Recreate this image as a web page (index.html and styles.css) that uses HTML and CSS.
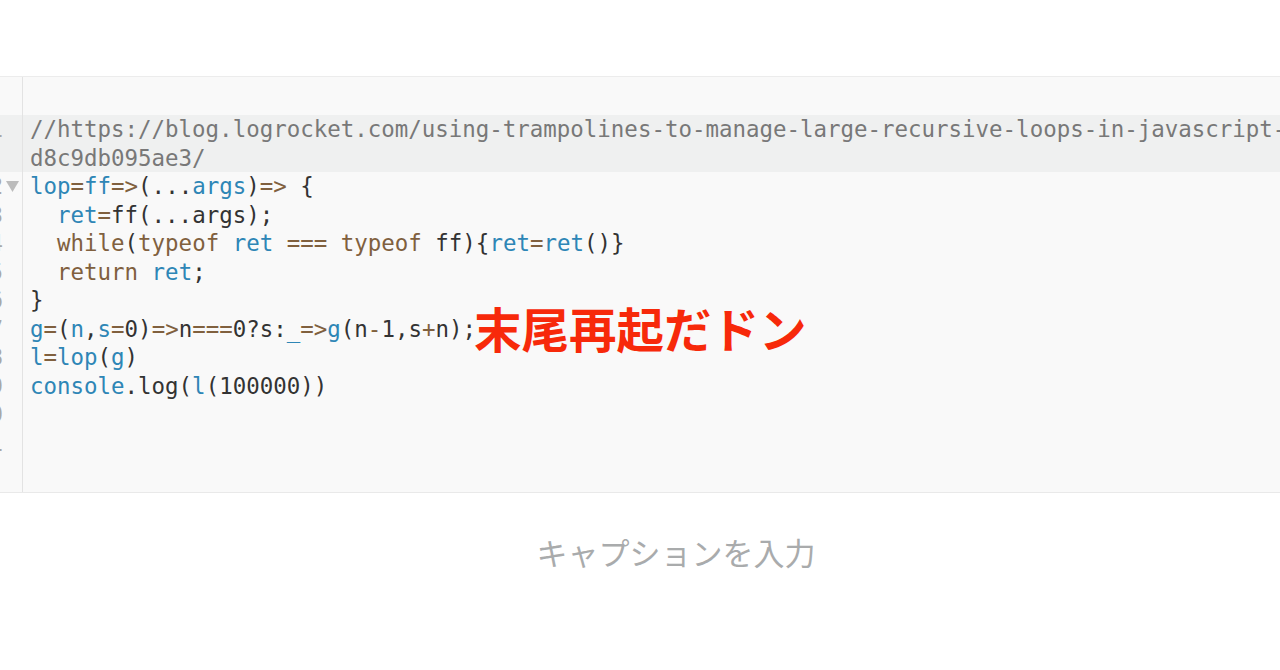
FILE: index.html
```html
<!DOCTYPE html>
<html lang="ja">
<head>
<meta charset="utf-8">
<title>code</title>
<link rel="stylesheet" href="styles.css">
</head>
<body>
<figure class="figure">
  <div class="editor">
    <div class="gutter">
      <div class="gl gl-2"><span class="num">1</span><span class="fold"></span></div>
      <div class="gl"><span class="num">2</span><span class="fold"><svg class="fold-icon" width="13" height="11" viewBox="0 0 13 11"><polygon points="0,0 13,0 6.5,11" fill="#bcbcbc"/></svg></span></div>
      <div class="gl"><span class="num">3</span><span class="fold"></span></div>
      <div class="gl"><span class="num">4</span><span class="fold"></span></div>
      <div class="gl"><span class="num">5</span><span class="fold"></span></div>
      <div class="gl"><span class="num">6</span><span class="fold"></span></div>
      <div class="gl"><span class="num">7</span><span class="fold"></span></div>
      <div class="gl"><span class="num">8</span><span class="fold"></span></div>
      <div class="gl"><span class="num">9</span><span class="fold"></span></div>
      <div class="gl"><span class="num">10</span><span class="fold"></span></div>
      <div class="gl"><span class="num">11</span><span class="fold"></span></div>
    </div>
    <div class="code">
      <div class="line line-active"><span class="cm">//https://blog.logrocket.com/using-trampolines-to-manage-large-recursive-loops-in-javascript-
d8c9db095ae3/</span></div>
      <div class="line"><span class="v">lop</span><span class="o">=</span><span class="v">ff</span><span class="o">=&gt;</span>(...<span class="v">args</span>)<span class="o">=&gt;</span> {</div>
      <div class="line">  <span class="v">ret</span><span class="o">=</span>ff(...args);</div>
      <div class="line">  <span class="k">while</span>(<span class="k">typeof</span> <span class="v">ret</span> <span class="o">===</span> <span class="k">typeof</span> ff){<span class="v">ret</span><span class="o">=</span><span class="v">ret</span>()}</div>
      <div class="line">  <span class="k">return</span> <span class="v">ret</span>;</div>
      <div class="line">}</div>
      <div class="line"><span class="v">g</span><span class="o">=</span>(<span class="v">n</span>,<span class="v">s</span><span class="o">=</span>0)<span class="o">=&gt;</span>n<span class="o">===</span>0?s:<span class="v">_</span><span class="o">=&gt;</span><span class="v">g</span>(n<span class="o">-</span>1,s<span class="o">+</span>n);<span class="note">末尾再起だドン</span></div>
      <div class="line"><span class="v">l</span><span class="o">=</span><span class="v">lop</span>(<span class="v">g</span>)</div>
      <div class="line"><span class="v">console</span>.log(<span class="v">l</span>(100000))</div>
      <div class="line"> </div>
    </div>
  </div>
  <figcaption class="caption">キャプションを入力</figcaption>
</figure>
</body>
</html>
```
FILE: styles.css
```css
html, body {
  margin: 0;
  padding: 0;
  background: #ffffff;
}

body {
  width: 1280px;
  height: 670px;
  overflow: hidden;
}

.figure {
  margin: 0;
  padding-top: 76px;
}

.editor {
  display: flex;
  height: 415px;
  background: #f9f9f9;
  border-top: 1px solid #ececec;
  border-bottom: 1px solid #e9e9e9;
  overflow: hidden;
  font-family: "DejaVu Sans Mono", monospace;
  font-size: 22.45px;
  line-height: 28.5px;
  color: #333333;
}

.gutter {
  flex: 0 0 22px;
  width: 22px;
  border-right: 1px solid #e3e3e3;
  padding-top: 38px;
  overflow: hidden;
  color: #a8a8a8;
}

.gl {
  display: flex;
  height: 28.5px;
  justify-content: flex-end;
}

.gl-2 {
  height: 57px;
  background: #eff0f0;
}

.gl .num {
  display: flex;
  justify-content: flex-end;
  flex: 0 0 3px;
  width: 3px;
  overflow: visible;
  white-space: nowrap;
}

.fold {
  flex: 0 0 19px;
  width: 19px;
  display: flex;
  justify-content: center;
  align-items: flex-start;
  padding-top: 9px;
  box-sizing: border-box;
}

.fold-icon {
  display: block;
}

.code {
  flex: 1 1 auto;
  padding-top: 38px;
  min-width: 0;
}

.line {
  padding-left: 7px;
  white-space: pre;
}

.line-active {
  background: #eff0f0;
}

.cm { color: #787878; }
.v { color: #2e86b6; }
.o { color: #80603e; }
.k { color: #80603e; }

.note {
  display: inline-block;
  vertical-align: -11px;
  line-height: 0;
  margin-left: -2px;
  font-family: "Noto Sans CJK JP", sans-serif;
  font-weight: 700;
  font-size: 47.5px;
  color: #f7290a;
}

.caption {
  margin-top: 39px;
  padding-left: 72px;
  text-align: center;
  font-family: "Noto Sans CJK JP", sans-serif;
  font-size: 31px;
  line-height: 40px;
  color: #a9abac;
}
```
